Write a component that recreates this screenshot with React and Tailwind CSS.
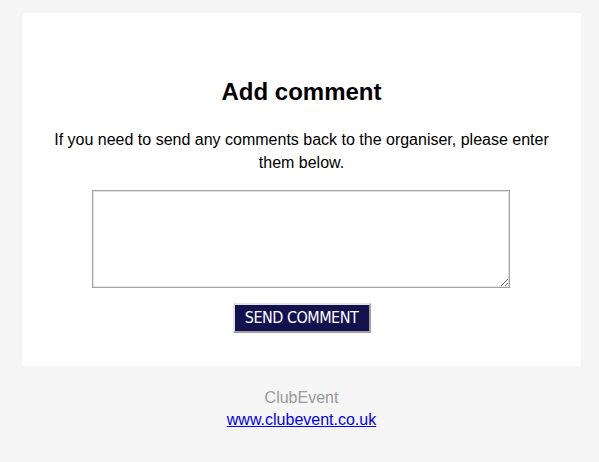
import React from 'react';

export default function App() {
    return (
        <div className="min-h-[462px] bg-[#f5f5f5] pt-[13px] pl-[22px] pr-[18px] pb-8 font-['Liberation_Sans',Arial,sans-serif]">
            <div className="bg-white rounded-[3px] pt-[65px] pb-[33px] px-5 text-center">
                <h2 className="text-[24px] leading-[28px] font-bold text-black">Add comment</h2>
                <p className="mt-[22px] text-[16px] leading-[23px] text-black">
                    If you need to send any comments back to the organiser, please enter them below.
                </p>
                <textarea
                    className="block ml-[50px] mt-[16px] w-[418px] h-[98px] bg-white border border-[#a3a3a3] shadow-[inset_0_0_0_1px_#e2e2e2] resize-y"
                />
                <button
                    type="button"
                    className="mt-[15px] w-[138px] h-[30px] bg-[#13124f] text-white text-[16px] leading-none border-2 border-t-[#e3e3e3] border-l-[#e3e3e3] border-b-[#a0a0a0] border-r-[#a0a0a0] font-['DejaVu_Sans_Condensed','Liberation_Sans_Narrow',sans-serif] tracking-[-0.5px]"
                >
                    SEND COMMENT
                </button>
            </div>
            <div className="mt-[21px] text-center text-[16px] leading-[22px]">
                <div className="text-[#999999]">ClubEvent</div>
                <a href="#" className="text-[#0000ee] underline">www.clubevent.co.uk</a>
            </div>
        </div>
    );
}
